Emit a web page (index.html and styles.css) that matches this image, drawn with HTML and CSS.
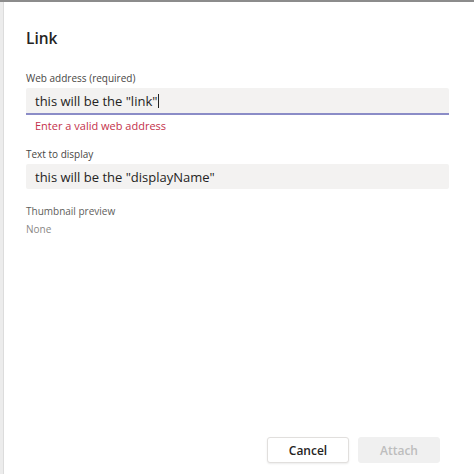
FILE: index.html
```html
<!DOCTYPE html>
<html>
<head>
<meta charset="utf-8">
<link rel="stylesheet" href="styles.css">
</head>
<body>
<div class="topbar"></div>
<div class="main">
  <div class="side"></div>
  <div class="dialog">
    <h1 class="title">Link</h1>
    <div class="field">
      <label class="label">Web address (required)</label>
      <div class="input focused"><span>this will be the "link"</span><span class="caret"></span></div>
      <div class="error">Enter a valid web address</div>
    </div>
    <div class="field">
      <label class="label">Text to display</label>
      <div class="input"><span>this will be the "displayName"</span></div>
    </div>
    <div class="field thumb">
      <div class="label muted">Thumbnail preview</div>
      <div class="none">None</div>
    </div>
    <div class="actions">
      <button class="btn cancel">Cancel</button>
      <button class="btn attach">Attach</button>
    </div>
  </div>
</div>
</body>
</html>
```
FILE: styles.css
```css
html, body {
  margin: 0;
  padding: 0;
  background: #ffffff;
  font-family: "Open Sans", "Noto Sans", sans-serif;
  color: #252423;
}
body {
  width: 474px;
  height: 474px;
  overflow: hidden;
  display: flex;
  flex-direction: column;
}
.topbar {
  height: 2px;
  background: #8c8c8c;
  flex: none;
}
.main {
  flex: 1;
  display: flex;
}
.side {
  width: 3px;
  background: #ececec;
  border-right: 1px solid #dcdcdc;
  flex: none;
}
.dialog {
  flex: 1;
  padding: 0 25px 0 22px;
  display: flex;
  flex-direction: column;
}
.title {
  margin: 26px 0 0;
  font-size: 15.5px;
  font-weight: 600;
  line-height: 20px;
  color: #252423;
}
.field {
  display: flex;
  flex-direction: column;
}
.field:first-of-type {
  margin-top: 23px;
}
.label {
  font-size: 10px;
  line-height: 14px;
  color: #484644;
  margin-bottom: 3px;
}
.label.muted {
  color: #605e5c;
}
.input {
  height: 25px;
  background: #f3f2f1;
  display: flex;
  align-items: center;
  padding-left: 9px;
  font-size: 13px;
  color: #252423;
  border-radius: 2px;
}
.input.focused {
  border-bottom: 2px solid #8b8cc7;
  border-radius: 2px 2px 0 0;
}
.caret {
  display: inline-block;
  width: 1px;
  height: 14px;
  background: #252423;
  margin-left: 1px;
}
.error {
  font-size: 11px;
  line-height: 15px;
  color: #c4314b;
  padding-left: 9px;
  margin-top: 3px;
}
.field + .field {
  margin-top: 14px;
}
.field.thumb {
  margin-top: 15px;
}
.none {
  font-size: 10px;
  line-height: 14px;
  color: #8a8886;
  margin-top: 1px;
}
.actions {
  margin-top: auto;
  margin-bottom: 11px;
  display: flex;
  justify-content: flex-end;
  gap: 9px;
  padding-right: 9px;
}
.btn {
  width: 82px;
  height: 26px;
  font-family: inherit;
  font-size: 12px;
  font-weight: 600;
  border-radius: 3px;
  padding: 0;
}
.cancel {
  background: #ffffff;
  border: 1px solid #e1dfdd;
  color: #252423;
  box-shadow: 0 1px 2px rgba(0,0,0,0.08);
}
.attach {
  background: #f0f0f0;
  border: 1px solid #f0f0f0;
  color: #bdbdbd;
}
```
